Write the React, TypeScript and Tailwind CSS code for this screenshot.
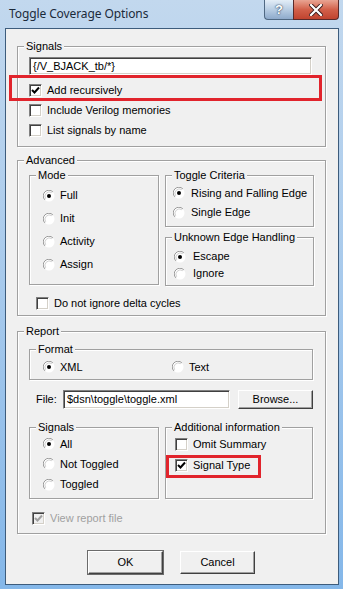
import React from "react";

const Check = ({ checked = false, disabled = false }: { checked?: boolean; disabled?: boolean }) => (
  <span
    className={`box-border w-[13px] h-[13px] shrink-0 border border-t-[#808080] border-l-[#808080] border-b-white border-r-white shadow-[inset_1px_1px_0_#404040,inset_-1px_-1px_0_#d4d0c8] flex items-center justify-center ${
      disabled ? "bg-[#f0f0f0]" : "bg-white"
    }`}
  >
    {checked && (
      <svg width="9" height="9" viewBox="0 0 9 9">
        <path d="M1 4 L3.5 6.5 L8 1.5" fill="none" stroke={disabled ? "#a0a0a0" : "#000"} strokeWidth="2" />
      </svg>
    )}
  </span>
);

const Radio = ({ checked = false }: { checked?: boolean }) => (
  <svg width="12" height="12" viewBox="0 0 12 12" className="shrink-0">
    <circle cx="6" cy="6" r="5.5" fill="#fff" />
    <path d="M1.9 9.9 A5.4 5.4 0 0 1 9.9 1.9" fill="none" stroke="#9a9a9a" strokeWidth="1" />
    <path d="M2.7 8.8 A4.4 4.4 0 0 1 8.8 2.7" fill="none" stroke="#d0d0d0" strokeWidth="1" />
    {checked && <circle cx="6" cy="6" r="2" fill="#000" />}
  </svg>
);

const CheckRow = ({
  label,
  checked,
  disabled,
  className = "",
}: {
  label: string;
  checked?: boolean;
  disabled?: boolean;
  className?: string;
}) => (
  <div className={`flex items-center gap-[5px] ${className}`}>
    <Check checked={checked} disabled={disabled} />
    <span className={disabled ? "text-[#a0a0a0]" : ""}>{label}</span>
  </div>
);

const RadioRow = ({ label, checked, className = "" }: { label: string; checked?: boolean; className?: string }) => (
  <div className={`flex items-center gap-[5px] ${className}`}>
    <Radio checked={checked} />
    <span>{label}</span>
  </div>
);

const Group = ({ label, className = "", children }: { label: string; className?: string; children?: React.ReactNode }) => (
  <div className={`relative border border-[#a0a0a0] shadow-[inset_1px_1px_0_#fff,1px_1px_0_#fff] ${className}`}>
    <span className="absolute left-[6px] top-[-7px] px-[2px] bg-[#f0f0f0] leading-[13px] whitespace-nowrap">{label}</span>
    {children}
  </div>
);

const Sunken = ({ value, className = "" }: { value: string; className?: string }) => (
  <div
    className={`bg-white border border-t-[#808080] border-l-[#808080] border-b-white border-r-white shadow-[inset_1px_1px_0_#404040,inset_-1px_-1px_0_#d4d0c8] flex items-center pl-[3px] ${className}`}
  >
    {value}
  </div>
);

const Button = ({ label, className = "" }: { label: string; className?: string }) => (
  <div
    className={`flex items-center justify-center bg-[#f0f0f0] border border-t-white border-l-white border-b-[#404040] border-r-[#404040] shadow-[inset_-1px_-1px_0_#a0a0a0] ${className}`}
  >
    {label}
  </div>
);

export default function App() {
  return (
    <div className="w-[343px] h-[589px] flex flex-col bg-gradient-to-b from-[#c2d8ee] via-[#a6c9ec] to-[#84b7e9] pl-[5px] pr-[4px] pb-[4px] font-['Liberation_Sans',Arial,sans-serif] text-[11px] text-black overflow-hidden">
      {/* title bar */}
      <div className="h-[28px] shrink-0 flex items-start">
        <span className="mt-[6px] ml-[4px] text-[12px] font-['Noto_Sans',sans-serif] tracking-[-0.1px] leading-[16px] text-[#1b2a3a]">
          Toggle Coverage Options
        </span>
        <div className="ml-auto mr-[0px] flex h-[20px]">
          <div className="w-[29px] h-[20px] rounded-bl-[4px] border border-[#4f6882] border-t-0 border-r-0 bg-gradient-to-b from-[#e3edf7] via-[#b8cde3] to-[#8eaacb] flex items-center justify-center text-white font-bold text-[13px] [text-shadow:0_0_2px_#2d4460,0_0_1px_#2d4460]">
            ?
          </div>
          <div className="w-[46px] h-[20px] rounded-br-[4px] border border-[#5a2a2a] border-t-0 bg-gradient-to-b from-[#e8a493] via-[#d2604a] to-[#c0432f] flex items-center justify-center">
            <svg width="14" height="12" viewBox="0 0 14 12">
              <path d="M2 1 L12 11 M12 1 L2 11" stroke="#3a1a1a" strokeWidth="4" strokeLinecap="square" />
              <path d="M2 1 L12 11 M12 1 L2 11" stroke="#fff" strokeWidth="2.2" strokeLinecap="square" />
            </svg>
          </div>
        </div>
      </div>

      {/* client area */}
      <div className="relative flex-1 border border-[#3d5c7c] bg-[#f0f0f0] pl-[11px] pr-[12px] pt-[17px] flex flex-col">
        {/* Signals */}
        <Group label="Signals" className="h-[101px] pl-[11px] pr-[13px] pt-[10px]">
          <Sunken value="{/V_BJACK_tb/*}" className="h-[18px]" />
          <div className="mt-[5px] flex flex-col">
            <CheckRow label="Add recursively" checked className="h-[20px]" />
            <CheckRow label="Include Verilog memories" className="h-[20px]" />
            <CheckRow label="List signals by name" className="h-[20px]" />
          </div>
        </Group>

        {/* Advanced */}
        <Group label="Advanced" className="mt-[13px] h-[156px] pl-[11px] pt-[14px]">
          <div className="flex gap-[6px]">
            <Group label="Mode" className="w-[130px] h-[110px] pl-[13px] pt-[8px]">
              <RadioRow label="Full" checked className="h-[23px]" />
              <RadioRow label="Init" className="h-[23px]" />
              <RadioRow label="Activity" className="h-[23px]" />
              <RadioRow label="Assign" className="h-[23px]" />
            </Group>
            <div className="flex flex-col">
              <Group label="Toggle Criteria" className="w-[149px] h-[52px] pl-[7px] pt-[7px]">
                <RadioRow label="Rising and Falling Edge" checked className="h-[20px] gap-[6px]" />
                <RadioRow label="Single Edge" className="h-[19px] gap-[6px]" />
              </Group>
              <Group label="Unknown Edge Handling" className="mt-[10px] w-[149px] h-[49px] pl-[8px] pt-[10px]">
                <RadioRow label="Escape" checked className="h-[17px] gap-[7px]" />
                <RadioRow label="Ignore" className="h-[17px] gap-[7px]" />
              </Group>
            </div>
          </div>
          <CheckRow label="Do not ignore delta cycles" className="mt-[7px] ml-[7px] h-[20px]" />
        </Group>

        {/* Report */}
        <Group label="Report" className="mt-[15px] h-[203px] pl-[11px] pt-[17px]">
          <Group label="Format" className="w-[284px] h-[31px] pl-[13px] pt-[7px] flex">
            <RadioRow label="XML" checked className="h-[20px] w-[129px]" />
            <RadioRow label="Text" className="h-[20px]" />
          </Group>
          <div className="mt-[10px] flex items-center h-[19px] pl-[7px]">
            <span className="w-[27px]">File:</span>
            <Sunken value="$dsn\toggle\toggle.xml" className="w-[167px] h-[19px]" />
            <Button label="Browse..." className="ml-[8px] w-[75px] h-[19px]" />
          </div>
          <div className="mt-[18px] flex gap-[6px]">
            <Group label="Signals" className="w-[130px] h-[72px] pl-[13px] pt-[6px]">
              <RadioRow label="All" checked className="h-[20px]" />
              <RadioRow label="Not Toggled" className="h-[20px]" />
              <RadioRow label="Toggled" className="h-[21px]" />
            </Group>
            <Group label="Additional information" className="w-[148px] h-[72px] pl-[9px] pt-[6px]">
              <CheckRow label="Omit Summary" className="h-[21px]" />
              <CheckRow label="Signal Type" checked className="h-[21px]" />
            </Group>
          </div>
          <CheckRow label="View report file" checked disabled className="mt-[9px] ml-[3px] h-[20px]" />
        </Group>

        {/* buttons */}
        <div className="mt-[17px] flex justify-center gap-[17px]">
          <Button label="OK" className="w-[75px] h-[23px] outline outline-1 outline-[#6b6b6b] outline-offset-0" />
          <Button label="Cancel" className="w-[75px] h-[23px]" />
        </div>

        {/* red highlight annotations */}
        <div className="absolute left-[3px] top-[46px] w-[313px] h-[26px] border-[3px] border-[#e1242c]" />
        <div className="absolute left-[160px] top-[426px] w-[95px] h-[23px] border-[3px] border-[#e1242c]" />
      </div>
    </div>
  );
}
